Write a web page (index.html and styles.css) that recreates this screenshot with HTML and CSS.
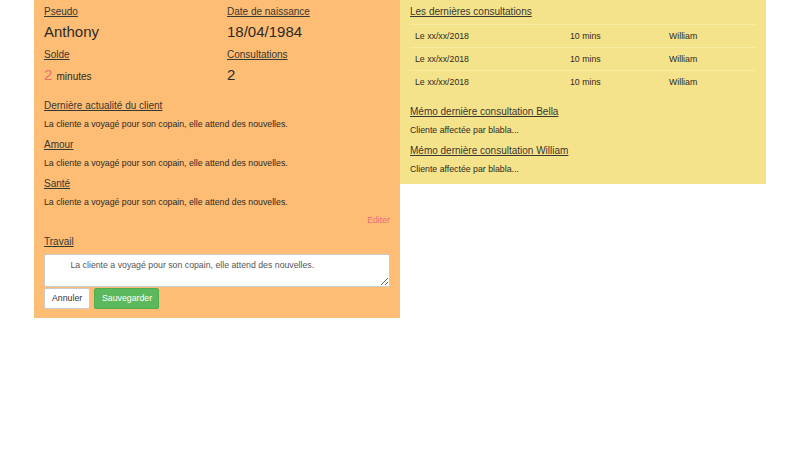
FILE: index.html
```html
<!DOCTYPE html>
<html lang="fr">
<head>
<meta charset="utf-8">
<title>Client</title>
<link rel="stylesheet" href="styles.css">
</head>
<body>
<div class="container">
  <section class="panel panel-client">
    <div class="fields">
      <div class="field">
        <div class="label">Pseudo</div>
        <div class="value">Anthony</div>
      </div>
      <div class="field">
        <div class="label">Date de naissance</div>
        <div class="value">18/04/1984</div>
      </div>
      <div class="field">
        <div class="label">Solde</div>
        <div class="value"><span class="red">2</span> <span class="unit">minutes</span></div>
      </div>
      <div class="field">
        <div class="label">Consultations</div>
        <div class="value">2</div>
      </div>
    </div>
    <div class="label sec-first">Dernière actualité du client</div>
    <p class="text">La cliente a voyagé pour son copain, elle attend des nouvelles.</p>
    <div class="label sec">Amour</div>
    <p class="text">La cliente a voyagé pour son copain, elle attend des nouvelles.</p>
    <div class="label sec">Santé</div>
    <p class="text">La cliente a voyagé pour son copain, elle attend des nouvelles.</p>
    <div class="edit-row"><a class="edit">Editer</a></div>
    <div class="label sec-travail">Travail</div>
    <textarea class="area">        La cliente a voyagé pour son copain, elle attend des nouvelles.</textarea>
    <div class="buttons">
      <button class="btn btn-default">Annuler</button>
      <button class="btn btn-success">Sauvegarder</button>
    </div>
  </section>
  <section class="panel panel-history">
    <div class="label">Les dernières consultations</div>
    <div class="table">
      <div class="row"><span>Le xx/xx/2018</span><span>10 mins</span><span>William</span></div>
      <div class="row"><span>Le xx/xx/2018</span><span>10 mins</span><span>William</span></div>
      <div class="row"><span>Le xx/xx/2018</span><span>10 mins</span><span>William</span></div>
    </div>
    <div class="label memo-first">Mémo dernière consultation Bella</div>
    <p class="text">Cliente affectée par blabla...</p>
    <div class="label memo">Mémo dernière consultation William</div>
    <p class="text">Cliente affectée par blabla...</p>
  </section>
</div>
</body>
</html>
```
FILE: styles.css
```css
html, body {
  margin: 0;
  padding: 0;
  background: #ffffff;
}
body {
  font-family: "Liberation Sans", Arial, sans-serif;
  color: #333333;
}
.container {
  display: flex;
  align-items: flex-start;
  margin: 0 34px;
}
.panel {
  width: 366px;
  box-sizing: border-box;
  padding: 5px 10px 9px;
}
.panel-client {
  background: #fdbd75;
}
.panel-history {
  background: #f5e38b;
}
.fields {
  display: grid;
  grid-template-columns: 1fr 1fr;
  column-gap: 20px;
  row-gap: 6px;
}
.label {
  font-size: 10px;
  line-height: 14px;
  text-decoration: underline;
  color: #3a3630;
}
.value {
  margin-top: 3px;
  font-size: 15px;
  line-height: 20px;
  color: #2d2a26;
}
.red {
  color: #e8706a;
}
.unit {
  font-size: 10px;
}
.text {
  margin: 5px 0 0;
  font-size: 8.75px;
  line-height: 12px;
  color: #2d2a26;
}
.sec-first {
  margin-top: 12px;
}
.sec {
  margin-top: 8px;
}
.edit-row {
  margin-top: 6px;
  text-align: right;
  font-size: 8.75px;
  line-height: 12px;
}
.edit {
  color: #e86f7e;
}
.sec-travail {
  margin-top: 9px;
}
.area {
  display: block;
  margin: 5px 0 0;
  width: 100%;
  height: 33px;
  box-sizing: border-box;
  border: 1px solid #cccccc;
  border-radius: 2px;
  background: #ffffff;
  padding: 4px 6px;
  font-family: "Liberation Sans", Arial, sans-serif;
  font-size: 8.75px;
  line-height: 12px;
  color: #555555;
  resize: vertical;
  white-space: pre-wrap;
}
.buttons {
  display: flex;
  gap: 4px;
  margin-top: 1px;
}
.btn {
  height: 21px;
  box-sizing: border-box;
  padding: 0 7px;
  border-radius: 2px;
  font-family: "Liberation Sans", Arial, sans-serif;
  font-size: 8.75px;
  line-height: 19px;
  cursor: pointer;
}
.btn-default {
  background: #ffffff;
  border: 1px solid #cccccc;
  color: #333333;
  width: 46px;
}
.btn-success {
  background: #5cb85c;
  border: 1px solid #4cae4c;
  color: #ffffff;
  width: 65px;
}
.table {
  margin-top: 5px;
}
.row {
  display: grid;
  grid-template-columns: 155px 99px 1fr;
  height: 23px;
  box-sizing: border-box;
  border-top: 1px solid #f8ec9f;
  font-size: 8.75px;
  line-height: 22px;
  color: #2d2a26;
}
.row span {
  padding-left: 5px;
}
.memo-first {
  margin-top: 12px;
}
.memo {
  margin-top: 8px;
}
.panel-history .text {
  margin-top: 5px;
}
```
